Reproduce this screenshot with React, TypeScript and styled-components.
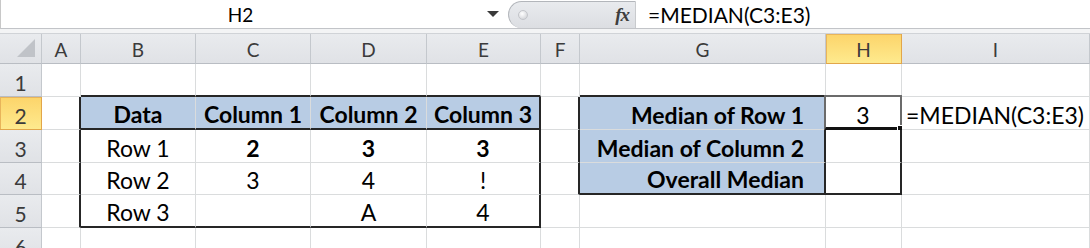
import React from 'react';
import styled, { createGlobalStyle, css } from 'styled-components';

const GlobalStyle = createGlobalStyle`
  html, body {
    margin: 0;
    padding: 0;
    background: #ffffff;
    overflow: hidden;
  }
`;

const COLS = ['A', 'B', 'C', 'D', 'E', 'F', 'G', 'H', 'I'];
const COL_WIDTHS = [39, 115, 115, 116, 114, 39, 246, 76];
const ROW_HEIGHTS = [33, 33, 33, 32, 33, 33];
const GRID = '#dadcdd';
const INK = '#262626';

const Window = styled.div`
  width: 1090px;
  height: 248px;
  font-family: Lato, 'Open Sans', sans-serif;
  color: #000;
  overflow: hidden;
`;

const FormulaBar = styled.div`
  display: flex;
  height: 28px;
  border-left: 1px solid #c8c8c8;
  border-bottom: 1px solid #c2c4c8;
`;

const NameBox = styled.div`
  width: 479px;
  display: flex;
  align-items: center;
  justify-content: center;
  font-size: 19px;
  padding-top: 1px;
`;

const DropArrow = styled.div`
  width: 28px;
  display: flex;
  align-items: center;
  justify-content: flex-start;
  padding-left: 7px;
  box-sizing: border-box;

  &::after {
    content: '';
    border-left: 6px solid transparent;
    border-right: 6px solid transparent;
    border-top: 6px solid #3a3a3a;
  }
`;

const Pill = styled.div`
  width: 128px;
  margin-top: 1px;
  background: linear-gradient(#e9ebee, #dcdee2);
  border: 1px solid #b3b6bb;
  border-right: 1px solid #c8cacd;
  border-bottom: none;
  border-top-left-radius: 14px;
  border-bottom-left-radius: 14px;
  display: flex;
  align-items: center;
  justify-content: space-between;
  padding: 0 6px 0 9px;
  box-sizing: border-box;
`;

const Knob = styled.span`
  width: 8px;
  height: 8px;
  border-radius: 50%;
  background: radial-gradient(circle at 40% 35%, #ffffff, #c9cbd0);
  border: 1px solid #c3c5ca;
`;

const Fx = styled.span`
  font-family: 'Liberation Serif', serif;
  font-style: italic;
  font-weight: bold;
  font-size: 19px;
  color: #3e3e3e;
  letter-spacing: -1px;
`;

const FormulaInput = styled.div`
  flex: 1;
  display: flex;
  align-items: center;
  padding-left: 12px;
  font-size: 21px;
  padding-top: 1px;
`;

const Spacer = styled.div`
  height: 4px;
  background: #f3f4f5;
  border-bottom: 1px solid #d0d3d7;
`;

const Sheet = styled.div`
  display: grid;
  grid-template-columns: 42px ${COL_WIDTHS.map((w) => `${w}px`).join(' ')} 1fr;
  grid-template-rows: 30px ${ROW_HEIGHTS.map((h) => `${h}px`).join(' ')};
`;

const headBase = css`
  background: linear-gradient(#e9ebee, #e0e2e6);
  border-right: 1px solid #c4c8cd;
  border-bottom: 1px solid #b9bdc3;
  box-sizing: border-box;
  display: flex;
  justify-content: center;
  color: #3b3b3b;
`;

const activeHead = css`
  background: linear-gradient(#fcd46a, #feea8e);
  border-right: 1px solid #e2a64a;
  border-bottom: 1px solid #e2a64a;
  box-shadow: inset 1px 1px 0 #e8b45a;
`;

const Corner = styled.div`
  ${headBase};
  position: relative;

  &::after {
    content: '';
    position: absolute;
    right: 6px;
    bottom: 6px;
    border-left: 18px solid transparent;
    border-bottom: 18px solid #c0c3c8;
  }
`;

const ColHead = styled.div<{ $active?: boolean }>`
  ${headBase};
  align-items: center;
  font-size: 19px;
  padding-top: 2px;
  ${(p) => p.$active && activeHead};
`;

const RowHead = styled.div<{ $active?: boolean }>`
  ${headBase};
  align-items: flex-end;
  font-size: 21px;
  line-height: 21px;
  padding-bottom: 3px;
  ${(p) => p.$active && activeHead};
`;

const Cell = styled.div<{
  $fill?: string;
  $bold?: boolean;
  $align?: 'left' | 'center' | 'right';
  $darkRight?: boolean;
  $darkBottom?: boolean;
}>`
  position: relative;
  box-sizing: border-box;
  display: flex;
  align-items: flex-end;
  justify-content: ${(p) =>
    p.$align === 'left' ? 'flex-start' : p.$align === 'right' ? 'flex-end' : 'center'};
  padding: 0 ${(p) => (p.$align === 'right' ? '20px' : '4px')} 2px 4px;
  font-size: 23px;
  line-height: 23px;
  font-weight: ${(p) => (p.$bold ? 700 : 400)};
  white-space: nowrap;
  background: ${(p) => p.$fill || '#fff'};
  border-right: ${(p) => (p.$darkRight ? `2px solid ${INK}` : `1px solid ${GRID}`)};
  border-bottom: ${(p) => (p.$darkBottom ? `2px solid ${INK}` : `1px solid ${GRID}`)};
`;

const Selection = styled.div`
  position: absolute;
  left: -2px;
  top: -2px;
  right: -2px;
  bottom: -2px;
  border: 2px solid #6b6b6b;
  border-bottom: 4px solid #111;
  pointer-events: none;
`;

const FillHandle = styled.div`
  position: absolute;
  right: -5px;
  bottom: -6px;
  width: 6px;
  height: 6px;
  background: #111;
  border: 1px solid #fff;
`;

type CellData = {
  text?: string;
  bold?: boolean;
  align?: 'left' | 'center' | 'right';
  fill?: string;
};

const BLUE = '#b8cce4';

// cell contents keyed "row,col" (col 0 = A)
const data: Record<string, CellData> = {
  '2,1': { text: 'Data', bold: true, fill: BLUE },
  '2,2': { text: 'Column 1', bold: true, fill: BLUE },
  '2,3': { text: 'Column 2', bold: true, fill: BLUE },
  '2,4': { text: 'Column 3', bold: true, fill: BLUE },
  '3,1': { text: 'Row 1' },
  '3,2': { text: '2', bold: true },
  '3,3': { text: '3', bold: true },
  '3,4': { text: '3', bold: true },
  '4,1': { text: 'Row 2' },
  '4,2': { text: '3' },
  '4,3': { text: '4' },
  '4,4': { text: '!' },
  '5,1': { text: 'Row 3' },
  '5,3': { text: 'A' },
  '5,4': { text: '4' },
  '2,6': { text: 'Median of Row 1', bold: true, align: 'right', fill: BLUE },
  '3,6': { text: 'Median of Column 2', bold: true, align: 'right', fill: BLUE },
  '4,6': { text: 'Overall Median', bold: true, align: 'right', fill: BLUE },
  '2,7': { text: '3' },
  '2,8': { text: '=MEDIAN(C3:E3)', align: 'left' },
};

// outlined ranges (inclusive)
const boxes = [
  { c1: 1, c2: 4, r1: 2, r2: 5 },
  { c1: 1, c2: 4, r1: 2, r2: 2 },
  { c1: 6, c2: 6, r1: 2, r2: 4 },
  { c1: 7, c2: 7, r1: 2, r2: 4 },
];

const darkBottom = (r: number, c: number) =>
  boxes.some((b) => c >= b.c1 && c <= b.c2 && (r === b.r2 || r === b.r1 - 1));
const darkRight = (r: number, c: number) =>
  boxes.some((b) => r >= b.r1 && r <= b.r2 && (c === b.c2 || c === b.c1 - 1));

const App: React.FC = () => {
  const rows = ROW_HEIGHTS.map((_, i) => i + 1);

  return (
    <Window>
      <GlobalStyle />
      <FormulaBar>
        <NameBox>H2</NameBox>
        <DropArrow />
        <Pill>
          <Knob />
          <Fx>fx</Fx>
        </Pill>
        <FormulaInput>=MEDIAN(C3:E3)</FormulaInput>
      </FormulaBar>
      <Spacer />
      <Sheet>
        <Corner />
        {COLS.map((c) => (
          <ColHead key={c} $active={c === 'H'}>
            {c}
          </ColHead>
        ))}
        {rows.map((r) => (
          <React.Fragment key={r}>
            <RowHead $active={r === 2}>{r}</RowHead>
            {COLS.map((_, c) => {
              const d = data[`${r},${c}`] || {};
              const isActive = r === 2 && c === 7;
              return (
                <Cell
                  key={c}
                  $fill={d.fill}
                  $bold={d.bold}
                  $align={d.align}
                  $darkRight={darkRight(r, c)}
                  $darkBottom={darkBottom(r, c)}
                >
                  {d.text}
                  {isActive && (
                    <Selection>
                      <FillHandle />
                    </Selection>
                  )}
                </Cell>
              );
            })}
          </React.Fragment>
        ))}
      </Sheet>
    </Window>
  );
};

export default App;
